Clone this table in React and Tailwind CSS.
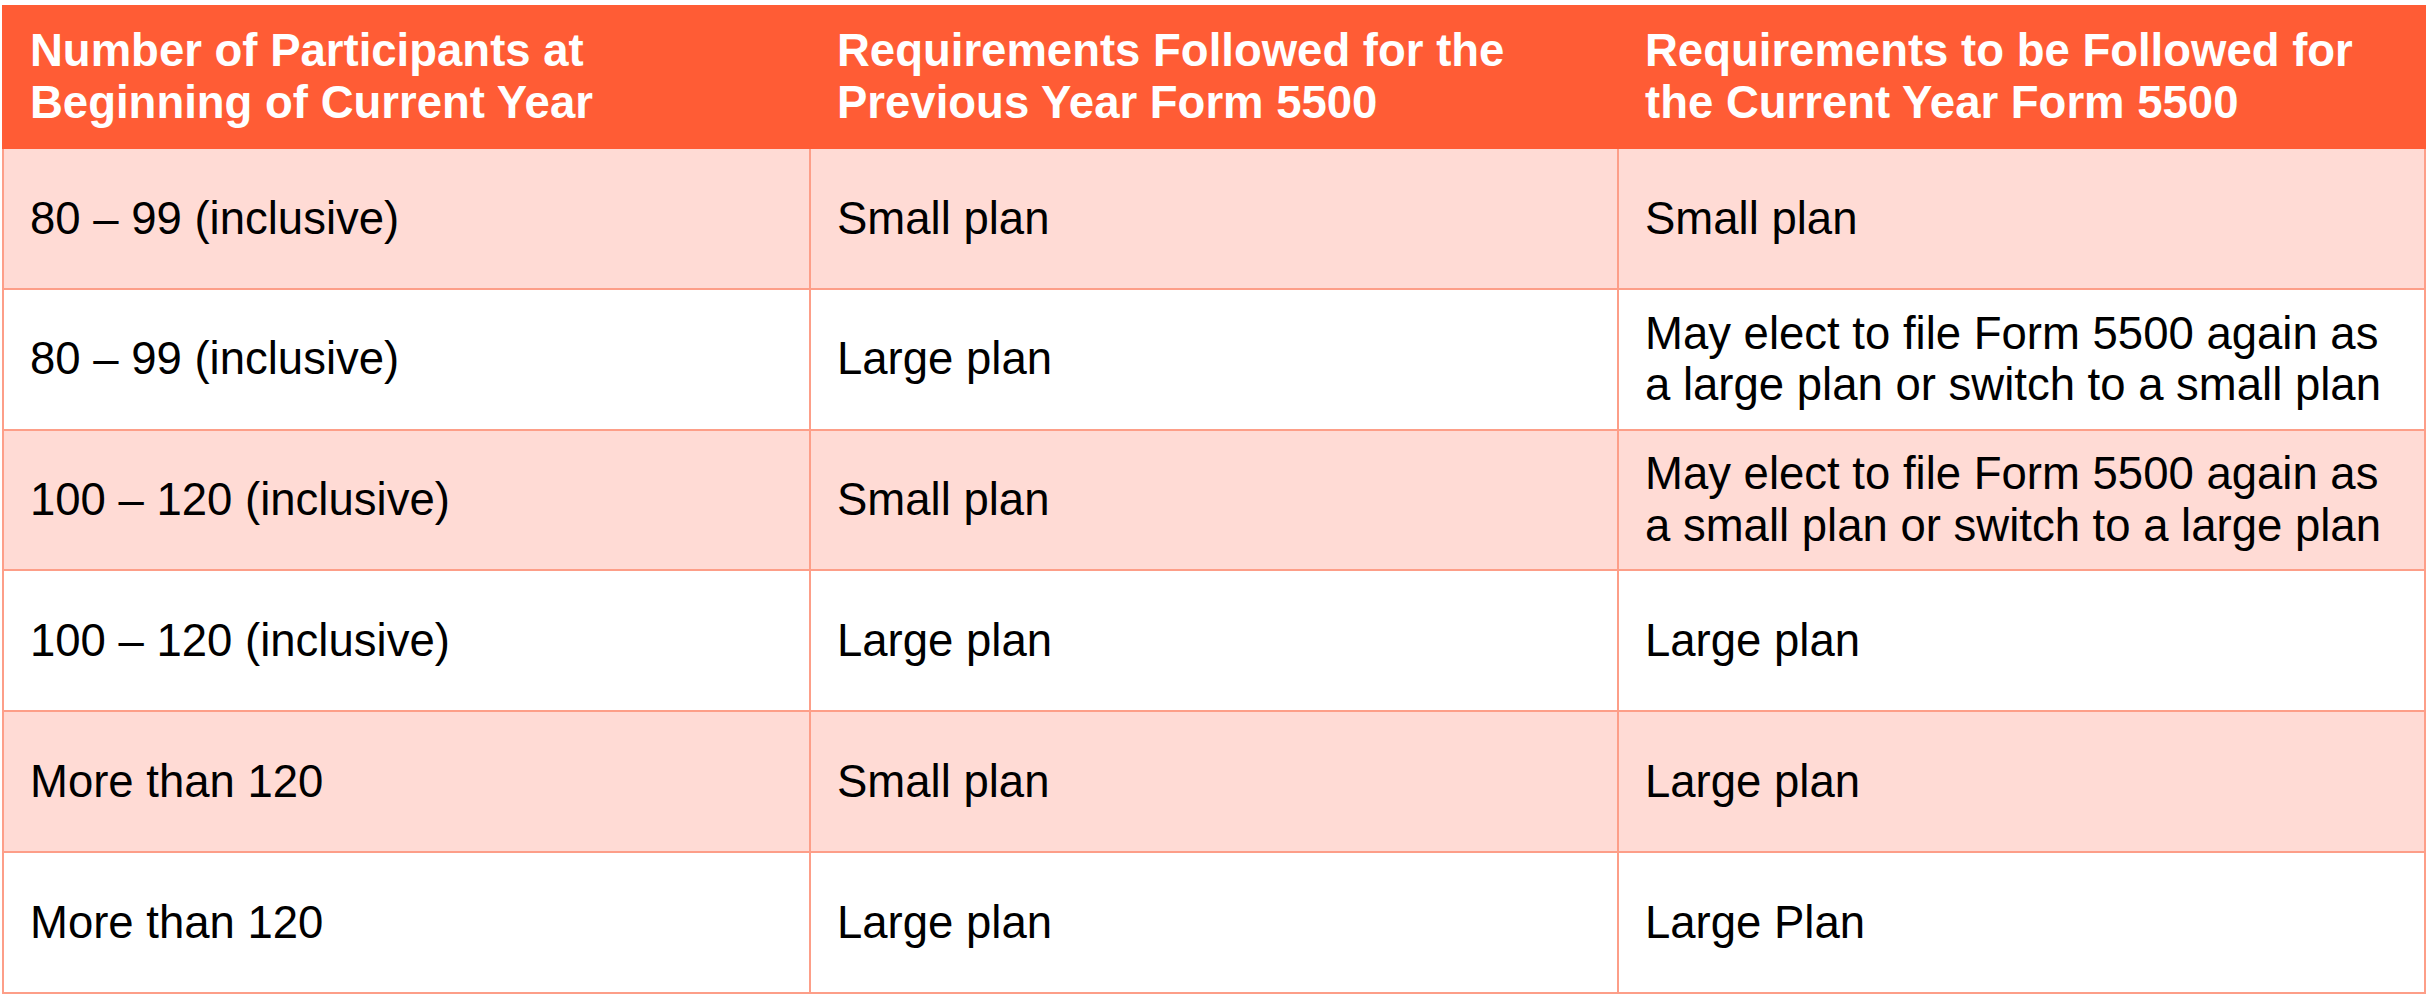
// Form 5500 participant-count comparison table
const headers = [
  ["Number of Participants at", "Beginning of Current Year"],
  ["Requirements Followed for the", "Previous Year Form 5500"],
  ["Requirements to be Followed for", "the Current Year Form 5500"],
];

const rows = [
  ["80 – 99 (inclusive)", "Small plan", ["Small plan"]],
  ["80 – 99 (inclusive)", "Large plan", ["May elect to file Form 5500 again as", "a large plan or switch to a small plan"]],
  ["100 – 120 (inclusive)", "Small plan", ["May elect to file Form 5500 again as", "a small plan or switch to a large plan"]],
  ["100 – 120 (inclusive)", "Large plan", ["Large plan"]],
  ["More than 120", "Small plan", ["Large plan"]],
  ["More than 120", "Large plan", ["Large Plan"]],
];

function Lines({ lines }) {
  return lines.map((l, i) => (
    <div key={i} className="whitespace-nowrap">
      {l}
    </div>
  ));
}

export default function App() {
  return (
    <div className="min-h-screen bg-white pt-[5px] pl-[2px] font-['Liberation_Sans',Arial,sans-serif] text-[45.5px] leading-[51.7px] text-black">
      <div className="w-[2424px]">
        {/* Header */}
        <div className="grid h-[144px] grid-cols-[809px_808px_807px] bg-[#ff5c35] font-bold text-white">
          {headers.map((h, i) => (
            <div key={i} className={`flex flex-col justify-center ${i === 0 ? "pl-[28px]" : "pl-[26px]"}`}>
              <Lines lines={h} />
            </div>
          ))}
        </div>

        {/* Body */}
        <div className="grid h-[845px] grid-rows-6">
          {rows.map((r, i) => (
            <div
              key={i}
              className={`grid grid-cols-[809px_808px_807px] border-b-2 border-[#fd9e88] ${i % 2 === 0 ? "bg-[#ffdbd5]" : "bg-white"}`}
            >
              <div className="flex flex-col justify-center border-x-2 border-[#fd9e88] pl-[26px]">
                <Lines lines={[r[0]]} />
              </div>
              <div className="flex flex-col justify-center border-r-2 border-[#fd9e88] pl-[26px]">
                <Lines lines={[r[1]]} />
              </div>
              <div className="flex flex-col justify-center border-r-2 border-[#fd9e88] pl-[26px]">
                <Lines lines={r[2]} />
              </div>
            </div>
          ))}
        </div>
      </div>
    </div>
  );
}
